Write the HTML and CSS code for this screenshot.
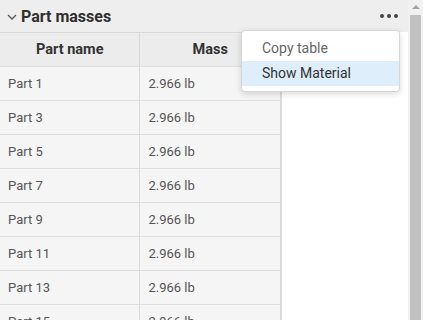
FILE: index.html
```html
<!DOCTYPE html>
<html lang="en">
<head>
    <meta charset="UTF-8">
    <meta name="viewport" content="width=device-width, initial-scale=1.0">
    <title>Part masses</title>
    <link rel="stylesheet" href="styles.css">
</head>
<body>
    <div class="frame">
        <!-- Panel -->
        <div class="panel">
            <div class="panel-header">
                <svg class="chevron" width="10" height="6" viewBox="0 0 10 6">
                    <path d="M1 1 L5 5 L9 1" fill="none" stroke="#555" stroke-width="1.3"/>
                </svg>
                <span class="panel-title">Part masses</span>
                <span class="dots"><i></i><i></i><i></i></span>
            </div>
            <div class="panel-body">
                <table class="mass-table">
                    <thead>
                        <tr><th>Part name</th><th>Mass</th></tr>
                    </thead>
                    <tbody>
                        <tr><td>Part 1</td><td>2.966 lb</td></tr>
                        <tr><td>Part 3</td><td>2.966 lb</td></tr>
                        <tr><td>Part 5</td><td>2.966 lb</td></tr>
                        <tr><td>Part 7</td><td>2.966 lb</td></tr>
                        <tr><td>Part 9</td><td>2.966 lb</td></tr>
                        <tr><td>Part 11</td><td>2.966 lb</td></tr>
                        <tr><td>Part 13</td><td>2.966 lb</td></tr>
                        <tr><td>Part 15</td><td>2.966 lb</td></tr>
                    </tbody>
                </table>
                <div class="blank"></div>
            </div>

            <!-- Dropdown menu -->
            <div class="menu">
                <div class="menu-item">Copy table</div>
                <div class="menu-item active">Show Material</div>
            </div>
        </div>

        <!-- Scrollbar -->
        <div class="scrollbar">
            <div class="scroll-arrow"></div>
            <div class="scroll-thumb"></div>
        </div>
    </div>
</body>
</html>
```
FILE: styles.css
```css
/* Page */
html, body {
    margin: 0;
    padding: 0;
    height: 100%;
    overflow: hidden;
}
body {
    font-family: Roboto, "Liberation Sans", sans-serif;
    color: #333;
    background-color: #fff;
}
.frame {
    display: flex;
    height: 320px;
}

/* Panel */
.panel {
    flex: 1;
    position: relative;
    display: flex;
    flex-direction: column;
    background-color: #eeeeee;
}
.panel-header {
    height: 32px;
    display: flex;
    align-items: center;
    padding: 0 10px 0 7px;
    flex-shrink: 0;
}
.chevron {
    margin-right: 4px;
    margin-top: 1px;
}
.panel-title {
    flex: 1;
    font-size: 16px;
    font-weight: bold;
    color: #2f2f2f;
}
.dots {
    display: flex;
    gap: 3px;
    margin-right: 0;
}
.dots i {
    width: 4px;
    height: 4px;
    border-radius: 50%;
    background-color: #444;
}
.panel-body {
    flex: 1;
    display: flex;
    min-height: 0;
    overflow: hidden;
}
.blank {
    flex: 1;
    background-color: #fff;
    border-left: 1px solid #dcdcdc;
}

/* Table */
.mass-table {
    border-collapse: collapse;
    width: 281px;
    flex-shrink: 0;
    font-size: 13px;
    align-self: flex-start;
}
.mass-table th {
    height: 33px;
    padding: 0;
    background-color: #ececec;
    border-top: 1px solid #d9d9d9;
    border-right: 1px solid #d9d9d9;
    font-size: 14.5px;
    font-weight: bold;
    color: #333;
    text-align: center;
    width: 140px;
}
.mass-table td {
    height: 33px;
    padding: 0 0 0 8px;
    background-color: #f5f5f5;
    border-top: 1px solid #dddddd;
    border-right: 1px solid #d9d9d9;
    color: #555;
}

/* Menu */
.menu {
    position: absolute;
    top: 30px;
    left: 241px;
    width: 159px;
    padding: 5px 0;
    background-color: #fff;
    border: 1px solid #d6d6d6;
    border-radius: 4px;
    box-shadow: 0 2px 6px rgba(0,0,0,0.15);
    box-sizing: border-box;
}
.menu-item {
    height: 25px;
    line-height: 25px;
    padding-left: 20px;
    font-size: 14px;
    color: #666;
}
.menu-item.active {
    background-color: #deeefa;
    color: #333;
}

/* Scrollbar */
.scrollbar {
    width: 15px;
    background-color: #f1f1f1;
    display: flex;
    flex-direction: column;
    align-items: center;
    flex-shrink: 0;
}
.scroll-arrow {
    margin-top: 5px;
    width: 0;
    height: 0;
    border-left: 4px solid transparent;
    border-right: 4px solid transparent;
    border-bottom: 4px solid #a3a3a3;
}
.scroll-thumb {
    margin-top: 6px;
    width: 11px;
    flex: 1;
    background-color: #c1c1c1;
}
```
